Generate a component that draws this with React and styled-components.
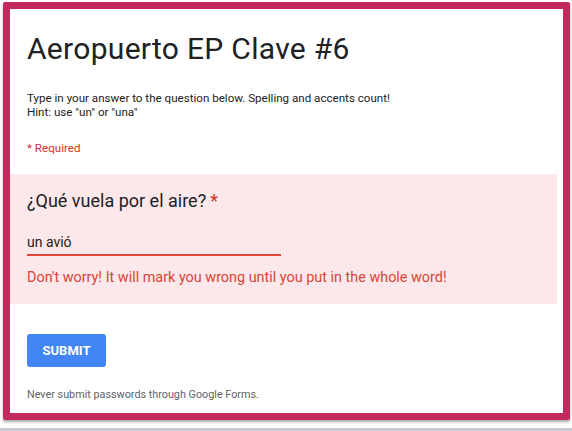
import React from "react";
import styled, { createGlobalStyle } from "styled-components";

const Global = createGlobalStyle`
  body {
    margin: 0;
    background: #ffffff;
    font-family: Roboto, "Liberation Sans", Arial, sans-serif;
  }
`;

const Page = styled.div`
  width: 572px;
  height: 431px;
  display: flex;
  flex-direction: column;
  box-sizing: border-box;
  padding: 2px 2px 0 3px;
`;

const Frame = styled.div`
  box-sizing: border-box;
  width: 567px;
  height: 418px;
  border: 7px solid #c3295b;
  border-radius: 2px;
  box-shadow: 0 2px 3px rgba(0, 0, 0, 0.35);
  background: #fff;
  display: flex;
  flex-direction: column;
`;

const Strip = styled.div`
  margin-top: auto;
  margin-left: -3px;
  margin-right: -2px;
  height: 3px;
  background: #c9c9d1;
`;

const Head = styled.div`
  padding: 22px 16px 0 17px;
`;

const Title = styled.h1`
  margin: 0;
  font-size: 30px;
  line-height: 36px;
  letter-spacing: 0.3px;
  font-weight: 400;
  color: #202124;
`;

const Desc = styled.p`
  margin: 24px 0 0;
  font-size: 11.6px;
  line-height: 14px;
  color: #202124;
`;

const Required = styled.div`
  margin-top: 22px;
  font-size: 11.6px;
  line-height: 14px;
  color: #d93025;
`;

const Question = styled.div`
  margin: 19px 6px 0 0;
  background: #fce8ea;
  padding: 15px 16px 16px 17px;
`;

const QTitle = styled.div`
  font-size: 18px;
  line-height: 24px;
  color: #202124;
`;

const Star = styled.span`
  color: #d93025;
  margin-left: 4px;
`;

const Answer = styled.div`
  margin-top: 19px;
  width: 254px;
  font-size: 14px;
  line-height: 20px;
  padding-bottom: 2px;
  border-bottom: 2px solid #e0443b;
  color: #202124;
`;

const Error = styled.div`
  margin-top: 12px;
  font-size: 14.4px;
  line-height: 20px;
  color: #db4437;
`;

const Foot = styled.div`
  padding: 30px 16px 0 17px;
`;

const Submit = styled.button`
  width: 79px;
  height: 33px;
  border: none;
  border-radius: 3px;
  background: #4285f4;
  color: #fff;
  font-family: Roboto, "Liberation Sans", Arial, sans-serif;
  font-size: 13px;
  font-weight: 700;
  padding: 0;
`;

const Note = styled.div`
  margin-top: 21px;
  font-size: 10.8px;
  line-height: 13px;
  color: #5f6368;
`;

export default function App() {
  return (
    <Page>
      <Global />
      <Frame>
        <Head>
          <Title>Aeropuerto EP Clave #6</Title>
          <Desc>
            Type in your answer to the question below. Spelling and accents count!
            <br />
            Hint: use "un" or "una"
          </Desc>
          <Required>* Required</Required>
        </Head>
        <Question>
          <QTitle>
            ¿Qué vuela por el aire?<Star>*</Star>
          </QTitle>
          <Answer>un avió</Answer>
          <Error>Don't worry! It will mark you wrong until you put in the whole word!</Error>
        </Question>
        <Foot>
          <Submit>SUBMIT</Submit>
          <Note>Never submit passwords through Google Forms.</Note>
        </Foot>
      </Frame>
      <Strip />
    </Page>
  );
}
